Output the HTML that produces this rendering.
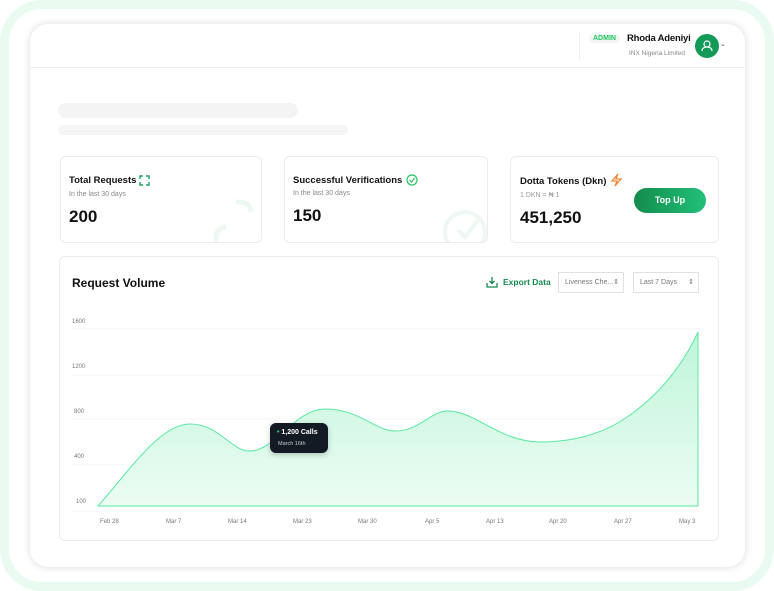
<!DOCTYPE html>
<html><head><meta charset="utf-8"><style>
*{box-sizing:border-box;margin:0;padding:0}
body{width:774px;height:591px;background:#fff;font-family:"Liberation Sans",sans-serif;position:relative;overflow:hidden;color:#111}
.frame{position:absolute;left:0;top:0;width:774px;height:591px;border:9px solid #e9fbf1;border-radius:42px}
.card{position:absolute;left:30px;top:24px;width:715px;height:543px;background:#fff;border-radius:18px;box-shadow:0 0 6px 2px rgba(0,0,0,.09)}
.hdr{position:absolute;left:30px;top:67px;width:715px;height:1px;background:#eee}
.abs{position:absolute}
.box{position:absolute;border:1px solid #ebebeb;border-radius:6px;background:#fff}
.t{font-size:9.5px;font-weight:bold;color:#111;white-space:nowrap}
.s{font-size:7px;color:#888}
.n{font-size:17px;font-weight:bold}
.ax{position:absolute;font-size:6px;color:#777}
</style></head><body>
<div class="frame"></div>
<div class="card"></div>
<div class="hdr"></div>
<div class="abs" style="left:579px;top:32px;width:1px;height:28px;background:#eee"></div>
<div class="abs" style="left:589px;top:34px;font-size:7px;font-weight:bold;color:#1fc760;background:#f3f3f3;padding:1px 4px;border-radius:6px">ADMIN</div>
<div class="abs" style="left:627px;top:33px;font-size:9.5px;font-weight:bold;letter-spacing:-0.2px">Rhoda Adeniyi</div>
<div class="abs" style="left:629px;top:50px;font-size:6.5px;color:#888">INX Nigeria Limited</div>
<div class="abs" style="left:695px;top:34px;width:24px;height:24px;border-radius:50%;background:#149a57">
<svg width="24" height="24" viewBox="0 0 24 24"><circle cx="12" cy="10" r="3" fill="none" stroke="#fff" stroke-width="1.2"/><path d="M7 17c0-3 2.5-4 5-4s5 1 5 4" fill="none" stroke="#fff" stroke-width="1.2"/></svg></div>
<div class="abs" style="left:720px;top:40px;font-size:7px;color:#555">⌄</div>
<div class="abs" style="left:58px;top:103px;width:240px;height:15px;border-radius:8px;background:#f4f4f4"></div>
<div class="abs" style="left:58px;top:125px;width:290px;height:10px;border-radius:5px;background:#f5f5f5"></div>

<div class="box" style="left:60px;top:156px;width:202px;height:87px;overflow:hidden">
<div class="abs t" style="left:8px;top:18px">Total Requests</div>
<svg class="abs" style="left:78px;top:18px" width="11" height="11" viewBox="0 0 11 11" fill="none" stroke="#1aa35c" stroke-width="1.4"><path d="M1 4V1h3M7 1h3v3M10 7v3H7M4 10H1V7"/></svg>
<div class="abs s" style="left:8px;top:34px">In the last 30 days</div>
<div class="abs n" style="left:8px;top:50px">200</div>
<svg class="abs" style="left:150px;top:40px" width="60" height="50" fill="none" stroke="#eef8f2" stroke-width="5"><path d="M5 50V40a10 10 0 0 1 10-10M25 5h5a10 10 0 0 1 10 10"/></svg>
</div>
<div class="box" style="left:284px;top:156px;width:204px;height:87px;overflow:hidden">
<div class="abs t" style="left:8px;top:18px">Successful Verifications</div>
<svg class="abs" style="left:121px;top:17px" width="12" height="12" viewBox="0 0 12 12" fill="none" stroke="#2ac25f" stroke-width="1.2"><circle cx="6" cy="6" r="5"/><path d="M3.5 6l2 2 3-4"/></svg>
<div class="abs s" style="left:8px;top:33px">In the last 30 days</div>
<div class="abs n" style="left:8px;top:49px">150</div>
<svg class="abs" style="left:155px;top:45px" width="50" height="45" fill="none" stroke="#eef8f2" stroke-width="4"><circle cx="25" cy="30" r="20"/><path d="M18 28l7 7 14-18"/></svg>
</div>
<div class="box" style="left:510px;top:156px;width:209px;height:87px">
<div class="abs t" style="left:9px;top:19px">Dotta Tokens (Dkn)</div>
<svg class="abs" style="left:99px;top:16px" width="13" height="14" viewBox="0 0 13 14" fill="none" stroke="#f08a3a" stroke-width="1.3"><path d="M8 1L2 8h5l-2 5 6-7H6z"/></svg>
<div class="abs s" style="left:9px;top:35px;color:#999">1 DKN = ₦ 1</div>
<div class="abs n" style="left:9px;top:51px">451,250</div>
<div class="abs" style="left:123px;top:31px;width:72px;height:25px;border-radius:13px;background:linear-gradient(90deg,#138c4c,#22c07a);color:#fff;font-size:9px;font-weight:bold;text-align:center;line-height:25px">Top Up</div>
</div>

<div class="box" style="left:59px;top:256px;width:660px;height:285px"></div>
<div class="abs" style="left:72px;top:276px;font-size:12px;font-weight:bold">Request Volume</div>
<svg class="abs" style="left:486px;top:276px" width="12" height="12" viewBox="0 0 12 12" fill="none" stroke="#178a4f" stroke-width="1.3"><path d="M6 1v6M3.5 5L6 7.5 8.5 5M1 7v4h10V7"/></svg>
<div class="abs" style="left:503px;top:277px;font-size:8.5px;font-weight:bold;color:#178a4f">Export Data</div>
<div class="abs" style="left:558px;top:272px;width:66px;height:21px;border:1px solid #e2e2e2;font-size:7px;color:#777;padding:6px 0 0 6px">Liveness Che...<span style="position:absolute;right:4px;top:5px">⇕</span></div>
<div class="abs" style="left:633px;top:272px;width:66px;height:21px;border:1px solid #e2e2e2;font-size:7px;color:#777;padding:6px 0 0 6px">Last 7 Days<span style="position:absolute;right:4px;top:5px">⇕</span></div>

<div class="ax" style="left:72px;top:319px">1600</div>
<div class="ax" style="left:72px;top:364px">1200</div>
<div class="ax" style="left:74px;top:409px">800</div>
<div class="ax" style="left:74px;top:454px">400</div>
<div class="ax" style="left:76px;top:499px">100</div>
<svg class="abs" style="left:0;top:0" width="774" height="591">
<defs><linearGradient id="g" x1="0" y1="0" x2="0" y2="1"><stop offset="0" stop-color="#bff5da"/><stop offset="1" stop-color="#ecfcf3"/></linearGradient></defs>
<g stroke="#f4f4f4" stroke-width="1"><line x1="72" y1="329" x2="700" y2="329"/><line x1="72" y1="375" x2="700" y2="375"/><line x1="72" y1="419" x2="700" y2="419"/><line x1="72" y1="465" x2="700" y2="465"/><line x1="72" y1="511" x2="700" y2="511"/></g>
<path d="M98 506C130 470 160 424 190 424C220 424 230 451 250 451C275 451 295 409 325 409C360 409 375 431 395 431C420 431 430 411 448 411C475 411 500 442 540 442C580 442 610 430 630 415C665 390 685 360 698 332V506Z" fill="url(#g)" stroke="#5ae8a2" stroke-width="1"/>
</svg>
<div class="abs" style="left:270px;top:423px;width:58px;height:30px;background:#141a24;border-radius:6px;box-shadow:0 2px 6px rgba(0,0,0,.2)">
<div class="abs" style="left:7px;top:6px;font-size:7px;color:#fff;font-weight:bold;white-space:nowrap"><span style="color:#2fd36a">•</span> 1,200 Calls</div>
<div class="abs" style="left:8px;top:18px;font-size:5.5px;color:#ccc">March 16th</div></div>
<div class="ax" style="left:100px;top:519px">Feb 28</div>
<div class="ax" style="left:166px;top:519px">Mar 7</div>
<div class="ax" style="left:228px;top:519px">Mar 14</div>
<div class="ax" style="left:293px;top:519px">Mar 23</div>
<div class="ax" style="left:358px;top:519px">Mar 30</div>
<div class="ax" style="left:425px;top:519px">Apr 5</div>
<div class="ax" style="left:486px;top:519px">Apr 13</div>
<div class="ax" style="left:549px;top:519px">Apr 20</div>
<div class="ax" style="left:614px;top:519px">Apr 27</div>
<div class="ax" style="left:679px;top:519px">May 3</div>
</body></html>
